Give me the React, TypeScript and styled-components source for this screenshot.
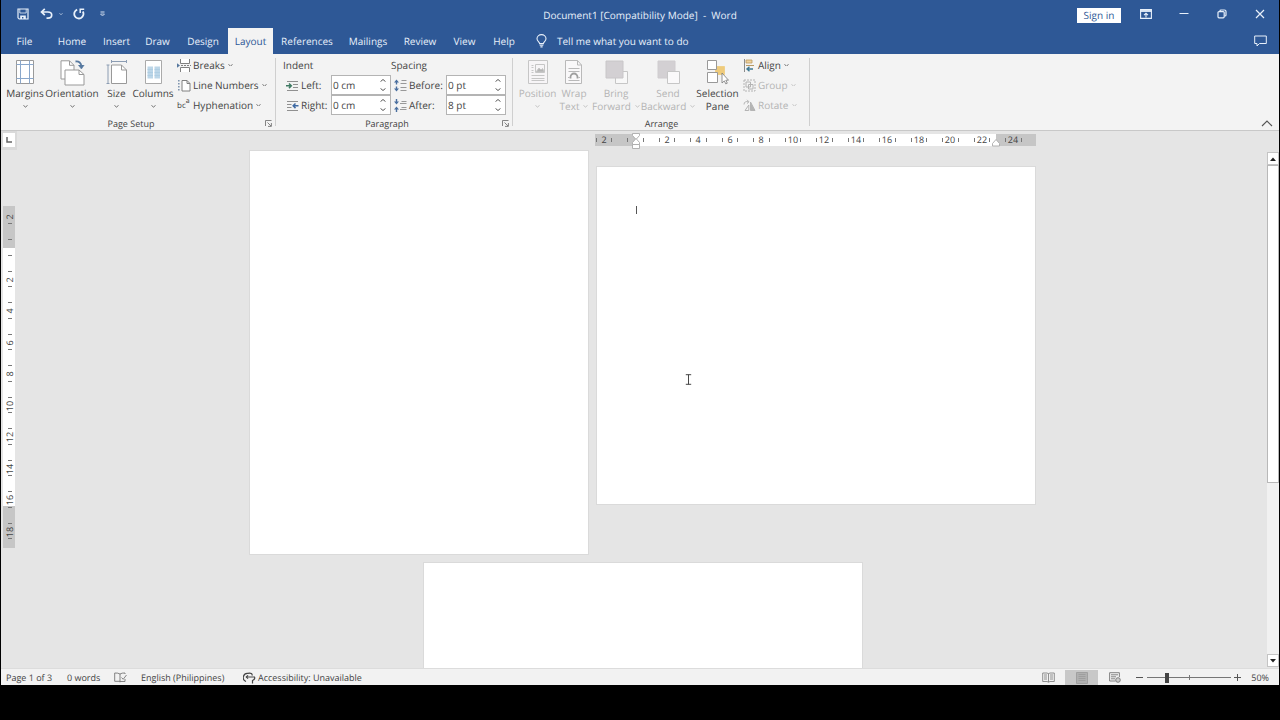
import React from "react";
import styled, { createGlobalStyle } from "styled-components";

const color = {
  brand: "#2e5896",
  brandText: "#e8f0fa",
  ribbon: "#f3f3f3",
  canvas: "#e5e5e5",
  line: "#c8c8c8",
  text: "#444444",
  muted: "#b4b4b4",
};

const GlobalStyle = createGlobalStyle`
  *, *::before, *::after { box-sizing: border-box; }
  body {
    margin: 0;
    background: #000;
    font-family: "Open Sans", "Noto Sans", sans-serif;
    font-size: 10px;
    line-height: 13px;
    color: ${color.text};
    text-rendering: geometricPrecision;
  }
  button, input {
    font: inherit;
    color: inherit;
    text-rendering: inherit;
    margin: 0;
    padding: 0;
    border: 0;
    background: none;
    border-radius: 0;
  }
  svg { display: block; flex: none; }
`;

const Window = styled.div`
  display: flex;
  flex-direction: column;
  height: 100vh;
  min-height: 420px;
  padding: 0 1px 35px;
  background: #000;
  overflow: hidden;
`;

/* Title bar */

const TitleBar = styled.header`
  display: grid;
  grid-template-columns: 1fr auto 1fr;
  align-items: center;
  height: 28px;
  flex: none;
  background: ${color.brand};
  color: ${color.brandText};
`;

const QuickAccess = styled.div`
  display: flex;
  align-items: center;
  gap: 7px;
  padding-left: 15px;
`;

const IconButton = styled.button<{ $width?: number }>`
  display: flex;
  align-items: center;
  justify-content: center;
  width: ${(p) => p.$width ?? 14}px;
  height: 14px;
`;

const UndoGroup = styled.div`
  display: flex;
  align-items: center;
  gap: 5px;
  padding: 0 2px;
`;

const DocumentTitle = styled.h1`
  margin: 0;
  padding-top: 2px;
  font-size: 10px;
  font-weight: 400;
  white-space: pre;
`;

const WindowControls = styled.div`
  display: flex;
  align-items: center;
  justify-content: flex-end;
`;

const SignIn = styled.button`
  width: 44px;
  height: 15px;
  margin: 2px 6px 0 0;
  background: #fff;
  color: ${color.brand};
`;

/* Tabs */

const TabBar = styled.nav`
  display: flex;
  align-items: stretch;
  height: 26px;
  flex: none;
  background: ${color.brand};
  color: ${color.brandText};
`;

const Tab = styled.button<{ $width: number; $active?: boolean }>`
  width: ${(p) => p.$width}px;
  flex: none;
  white-space: nowrap;
  background: ${(p) => (p.$active ? color.ribbon : "transparent")};
  color: ${(p) => (p.$active ? color.brand : color.brandText)};
`;

const TellMe = styled.button`
  display: flex;
  align-items: center;
  gap: 10px;
  margin-left: 12px;
  white-space: nowrap;
`;

const CommentButton = styled.button`
  display: flex;
  align-items: center;
  justify-content: center;
  width: 38px;
  margin-left: auto;
`;

/* Ribbon */

const Ribbon = styled.section`
  display: flex;
  flex: none;
  height: 77px;
  background: ${color.ribbon};
  border-bottom: 1px solid ${color.line};
`;

const Group = styled.div<{ $width: number }>`
  position: relative;
  display: flex;
  flex-direction: column;
  flex: none;
  width: ${(p) => p.$width}px;

  &::after {
    content: "";
    position: absolute;
    top: 4px;
    bottom: 4px;
    right: 0;
    width: 1px;
    background: #cfcfcf;
  }
`;

const GroupBody = styled.div<{ $inset: number }>`
  display: flex;
  flex: 1;
  padding-left: ${(p) => p.$inset}px;
`;

const GroupFooter = styled.div`
  display: flex;
  align-items: center;
  height: 13px;
`;

const GroupName = styled.h2`
  flex: 1;
  margin: 0;
  font-size: 9px;
  font-weight: 400;
  text-align: center;
`;

const Launcher = styled.button`
  display: flex;
  align-items: center;
  justify-content: center;
  width: 15px;
  height: 13px;
`;

const LargeButton = styled.button<{ $width: number }>`
  display: flex;
  flex-direction: column;
  align-items: center;
  flex: none;
  width: ${(p) => p.$width}px;
  padding-top: 6px;
  white-space: nowrap;

  &:disabled { color: ${color.muted}; }
`;

const LargeIcon = styled.span`
  display: flex;
  justify-content: center;
  height: 27px;
`;

const LabelLine = styled.span`
  display: flex;
  align-items: center;
  gap: 4px;
  height: 13px;
`;

const Stack = styled.div`
  display: flex;
  flex-direction: column;
  padding: 1px 0 0 4px;
`;

const SmallButton = styled.button`
  display: flex;
  align-items: center;
  gap: 2px;
  height: 20px;
  white-space: nowrap;

  &:disabled { color: ${color.muted}; }
`;

const SmallLabel = styled.span`
  padding-right: 1px;
`;

const FieldColumn = styled.div<{ $width: number }>`
  display: flex;
  flex-direction: column;
  flex: none;
  width: ${(p) => p.$width}px;
  padding-top: 1px;
`;

const FieldHeading = styled.span`
  height: 20px;
  line-height: 20px;
`;

const Field = styled.div`
  display: flex;
  align-items: center;
  gap: 2px;
  height: 20px;
  padding-left: 3px;

  label { flex: 1; white-space: nowrap; }
`;

const Spinner = styled.div`
  display: flex;
  width: 60px;
  height: 20px;
  background: #fff;
  border: 1px solid #b4b4b4;

  input {
    flex: 1;
    min-width: 0;
    padding-left: 1px;
  }
`;

const SpinnerArrows = styled.div`
  display: flex;
  flex-direction: column;
  width: 14px;

  button {
    display: flex;
    flex: 1;
    align-items: center;
    justify-content: center;
  }
`;

const CollapseButton = styled.button`
  display: flex;
  align-items: center;
  justify-content: center;
  align-self: flex-end;
  width: 24px;
  height: 14px;
  margin-left: auto;
`;

/* Work area */

const WorkArea = styled.main`
  display: flex;
  flex: 1;
  min-height: 0;
  background: ${color.canvas};
`;

const LeftRail = styled.div`
  display: flex;
  flex-direction: column;
  align-items: center;
  gap: 56px;
  width: 16px;
  flex: none;
`;

const TabSelector = styled.button`
  display: flex;
  align-items: center;
  justify-content: center;
  width: 16px;
  height: 19px;
  flex: none;
  background: #fff;
  border: 2px solid #dadada;
  border-bottom-width: 3px;
`;

const Canvas = styled.div`
  display: flex;
  flex-direction: column;
  align-items: center;
  flex: 1;
  min-width: 0;
  padding-left: 1px;
  overflow: hidden;
`;

const RulerRow = styled.div`
  display: flex;
  justify-content: flex-end;
  width: 787px;
  height: 19px;
  flex: none;
  padding-top: 2px;
`;

const PageRow = styled.div`
  display: flex;
  align-items: flex-start;
  gap: 7px;
  flex: none;
  padding-bottom: 7px;
`;

const Page = styled.article<{ $width: number; $height: number; $drop?: number }>`
  position: relative;
  flex: none;
  width: ${(p) => p.$width}px;
  height: ${(p) => p.$height}px;
  margin-top: ${(p) => p.$drop ?? 0}px;
  padding: 39px;
  background: #fff;
  border: 1px solid #dadada;
`;

const Caret = styled.div`
  width: 1px;
  height: 8px;
  background: #555;
`;

const Pointer = styled.div`
  position: absolute;
  left: 88px;
  top: 207px;
`;

const ScrollBar = styled.div`
  display: flex;
  flex-direction: column;
  justify-content: space-between;
  width: 12px;
  flex: none;
  margin: 21px 0 1px;
  background: #f1f1f1;
`;

const ScrollButton = styled.button`
  display: flex;
  align-items: center;
  justify-content: center;
  height: 13px;
  flex: none;
  background: #fff;
  border: 1px solid #c4c4c4;
`;

const ScrollTrack = styled.div`
  flex: 1;
`;

const ScrollThumb = styled.div`
  height: 65%;
  background: #fff;
  border: 1px solid #b8b8b8;
`;

/* Status bar */

const StatusBar = styled.footer`
  display: flex;
  align-items: center;
  justify-content: space-between;
  height: 17px;
  flex: none;
  padding: 0 10px 0 5px;
  background: #f2f2f2;
  border-top: 1px solid #dcdcdc;
  font-size: 9px;
`;

const StatusSide = styled.div`
  display: flex;
  align-items: center;
  height: 100%;
  padding-top: 1px;
`;

const StatusItem = styled.button<{ $width?: number }>`
  display: flex;
  align-items: center;
  gap: 2px;
  width: ${(p) => (p.$width ? `${p.$width}px` : "auto")};
  white-space: nowrap;
`;

const ViewButton = styled.button<{ $active?: boolean }>`
  display: flex;
  align-items: center;
  justify-content: center;
  width: 33px;
  height: 100%;
  background: ${(p) => (p.$active ? "#c8c8c8" : "transparent")};
`;

const ZoomRange = styled.input`
  appearance: none;
  width: 84px;
  height: 10px;
  margin: 0 3px 0 0;
  background:
    linear-gradient(#777, #777) center / 1px 5px no-repeat,
    linear-gradient(#777, #777) center / 100% 1px no-repeat;

  &::-webkit-slider-thumb {
    appearance: none;
    width: 4px;
    height: 10px;
    background: #444;
  }
`;

const ZoomValue = styled.output`
  width: 28px;
  text-align: right;
`;

/* Icons */

const Chevron = ({ up = false, size = 5 }: { up?: boolean; size?: number }) => (
  <svg width={size} height={size / 2} viewBox="0 0 6 3" fill="none" stroke="currentColor" strokeWidth="0.9">
    <path d={up ? "M.5 2.6 3 .5l2.5 2.1" : "M.5.4 3 2.5 5.5.4"} />
  </svg>
);

const CollapseIcon = () => (
  <svg width="12" height="7" viewBox="0 0 12 7" fill="none" stroke="#555" strokeWidth="1.1">
    <path d="M1 6 6 1l5 5" />
  </svg>
);

const SaveIcon = () => (
  <svg width="12" height="12" viewBox="0 0 12 12" fill="none" stroke="currentColor" strokeWidth="1.2">
    <path d="M1 1h10v10H2.2L1 9.8z" />
    <path d="M2.8 1v4h6.4V1" strokeWidth=".8" />
    <path d="M3.2 11V7.4h5.6V11H6.4V9H5v2z" fill="currentColor" stroke="none" />
  </svg>
);

const UndoIcon = () => (
  <svg width="13" height="12" viewBox="0 0 13 12" fill="none" stroke="currentColor" strokeWidth="1.7">
    <path d="M4.8.8 1.5 4l3.3 3.2M1.8 4h6c2.4 0 3.9 1.2 3.9 3.1S10.2 10.2 8 10.2H6.5" />
  </svg>
);

const RedoIcon = () => (
  <svg width="12" height="12" viewBox="0 0 12 12" fill="none" stroke="currentColor" strokeWidth="1.8">
    <path d="M4.2 1.6A4.6 4.6 0 1 0 9.8 3.5" />
    <path d="M7.2 5V1.2h4" strokeWidth="1.5" />
  </svg>
);

const CustomizeIcon = () => (
  <svg width="5" height="6" viewBox="0 0 5 6" fill="none" stroke="currentColor">
    <path d="M.5 1h4" strokeWidth=".9" />
    <path d="M.5 3 2.5 5l2-2z" strokeWidth=".7" />
  </svg>
);

const RibbonDisplayIcon = () => (
  <svg width="12" height="10" viewBox="0 0 12 10" fill="none" stroke="currentColor">
    <path d="M.6.6h10.8v8.8H.6z" strokeWidth="1.1" />
    <path d="M.6 2h10.8" strokeWidth="1.8" />
    <path d="M6 8.500V4.500M4 6.200l2-2 2 2" strokeWidth="1.1" />
  </svg>
);

const MinimizeIcon = () => (
  <svg width="10" height="10" viewBox="0 0 10 10" stroke="currentColor">
    <path d="M.5 4.500h9" />
  </svg>
);

const RestoreIcon = () => (
  <svg width="10" height="10" viewBox="0 0 10 10" fill="none" stroke="currentColor" strokeWidth="1.2">
    <rect x="1" y="2.6" width="6.2" height="6.2" rx="1" />
    <path d="M3 2.400V2q0-1 1-1h3.500Q9 1 9 2.500V6q0 1-1 1h-.5" />
  </svg>
);

const CloseIcon = () => (
  <svg width="10" height="10" viewBox="0 0 10 10" stroke="currentColor" strokeWidth="1.2">
    <path d="m1 1 8 8M9 1 1 9" />
  </svg>
);

const BulbIcon = () => (
  <svg width="11" height="14" viewBox="0 0 11 14" fill="none" stroke="currentColor" strokeWidth="1.1">
    <path d="M3.6 9.6C3.6 7.8 1 7.2 1 4.800a4.500 4.200 0 0 1 9 0c0 2.400-2.600 3-2.600 4.800zM3.700 11.200h3.600M4.400 12.900h2.200" />
  </svg>
);

const CommentIcon = () => (
  <svg width="13" height="12" viewBox="0 0 13 12" fill="none" stroke="currentColor">
    <path d="M.7 1h11.6v7.500H5.500L3 11V8.500H.7z" />
  </svg>
);

const MarginsIcon = () => (
  <svg width="20" height="25" viewBox="0 0 20 25" fill="none">
    <path d="M1.500.5h17v23h-17z" fill="#fff" stroke="#9a9a9a" />
    <path d="M5.500.5v23M14.500.5v23M1.500 4.500h17M1.500 18.500h17" stroke="#8aa7cb" />
  </svg>
);

const OrientationIcon = () => (
  <svg width="25" height="26" viewBox="0 0 25 26" fill="none" stroke="#999">
    <path d="M1 .8h8.500L14 5.300V19H1z" fill="#fff" />
    <path d="M9.500.8v4.500H14" />
    <path d="M5 10h14l5 4.500V25H5z" fill="#fff" />
    <path d="M19 10v4.500h5" />
    <path d="M15.500 1.500c3.500-.4 5.700 1.300 5.900 5" stroke="#56789f" strokeWidth="1.8" />
    <path d="m18.300 5 3.100 4 2.800-4" fill="#56789f" stroke="#56789f" strokeWidth=".6" />
  </svg>
);

const SizeIcon = () => (
  <svg width="22" height="25" viewBox="0 0 22 25" fill="none">
    <path d="M5.500 5h10l5 5v13.500h-15z" fill="#fff" stroke="#999" />
    <path d="M15.500 5v5h5" stroke="#999" />
    <path d="M5.500 1.500h15M5.500 0v3M20.500 0v3M2 5v18.500M.5 5h3M.5 23.500h3" stroke="#8c9db3" />
  </svg>
);

const ColumnsIcon = () => (
  <svg width="19" height="25" viewBox="0 0 19 25">
    <path d="M1.500.5h16v23h-16z" fill="#fff" stroke="#aaa" />
    <path d="M3.500 6.500H9v12H3.500zM10.500 6.500H16v12h-5.500z" fill="#bcd6e8" />
    <path d="M3.500 9.500H9M3.500 12.500H9M3.500 15.500H9M10.500 9.500H16M10.500 12.500H16M10.500 15.500H16" stroke="#a9cae1" strokeWidth=".7" />
  </svg>
);

const BreaksIcon = () => (
  <svg width="14" height="13" viewBox="0 0 14 13" fill="none" stroke="#808080">
    <path d="M3.500 0v4.500h9V0M3.500 13V8.500h9V13" fill="#fff" />
    <path d="M4 6.500h10" strokeDasharray="2 1" />
    <path d="M0 4.200 3 6.500 0 8.800z" fill="#56789f" stroke="none" />
  </svg>
);

const LineNumbersIcon = () => (
  <svg width="14" height="13" viewBox="0 0 14 13" fill="none" stroke="#808080">
    <path d="M5 1.500h5l3 3V12H5z" fill="#fff" />
    <path d="M10 1.500v3h3" />
    <path d="M1.800 1v11.500" stroke="#8096b0" strokeWidth="1.6" strokeDasharray="1.5 1.5" />
  </svg>
);

const HyphenIcon = styled.span`
  display: flex;
  align-items: flex-start;
  width: 14px;
  height: 14px;
  font-size: 8px;
  line-height: 16px;

  sup {
    font-size: 7px;
    line-height: 7px;
  }
`;

const HyphenationIcon = () => (
  <HyphenIcon aria-hidden="true">
    bc<sup>a</sup>
  </HyphenIcon>
);

const IndentIcon = ({ right = false }: { right?: boolean }) => (
  <svg width="13" height="11" viewBox="0 0 13 11" fill="none" stroke="#909090">
    <path d={right ? "M1 1.500h11M1 4.500h4.500M1 7.500h4.500M1 10.500h11" : "M1 1.500h11M7 4.500h5M7 7.500h5M1 10.500h11"} />
    <path
      d={right ? "M12.500 5.800H8M9.500 3.500 7.200 5.800l2.300 2.300" : "M0 5.800h4.500M3 3.500l2.300 2.300L3 8.100"}
      stroke={right ? "#3f6aa3" : "#3f7a63"}
      strokeWidth="1.5"
    />
  </svg>
);

const SpacingIcon = ({ after = false }: { after?: boolean }) => (
  <svg width="13" height="13" viewBox="0 0 13 13" fill="none">
    <path d={after ? "M2.500 0v3M2.500 13v-3" : "M2.500 2v3.500M2.500 11V7.500"} stroke="#4a6f9f" strokeWidth="1.4" />
    <path
      d={after ? "M0 2.500h5L2.500 5.500zM0 10.500h5L2.500 7.500z" : "M0 3.500h5L2.500.5zM0 9.500h5L2.500 12.500z"}
      fill="#4a6f9f"
    />
    <path d={after ? "M7.500 2.500h5M6 4.500h6.500M7.500 8.500h5M6 10.500h6.500" : "M7.500 1.500h5M6.500 4.500h6M6.500 8.500h6M6.500 11.500h6"} stroke="#999" />
  </svg>
);

const LauncherIcon = () => (
  <svg width="7" height="7" viewBox="0 0 7 7" fill="none" stroke="#777" strokeWidth=".9">
    <path d="M.5 6V.5H6.500M2.500 2.500 6 6M6.400 3v3.400H3" />
  </svg>
);

const PositionIcon = () => (
  <svg width="20" height="25" viewBox="0 0 20 25" fill="none" stroke="#c6c6c6">
    <path d="M.5.5h19v23H.5z" fill="#f7f5f7" />
    <path d="M7.500 4.500h9v8h-9z" />
    <path d="m8 12 3-4 2 2 1.500-1.500 2 3.500z" fill="#b5b5b5" />
    <path d="M3.500 5.500h2M3.500 7.500h2M3.500 10.500h2M3.500 12.500h2M3.500 15.500h13M3.500 18.500h13M3.500 20.500h13" />
  </svg>
);

const WrapTextIcon = () => (
  <svg width="18" height="25" viewBox="0 0 18 25" fill="none" stroke="#b9b9b9">
    <path d="M.5.5h12l4 4.500v18.500H.5z" fill="#f9f8f9" />
    <path d="M12.500.5v4.500h4" />
    <path d="M3.500 8.500h11M3.500 11.500h11M3.500 20.500h11M3 17.500h1.500M13.500 17.500H15" />
    <path d="M5.500 18.500v-1.500a3.500 3.500 0 0 1 7 0v1.500" stroke="#9f9f9f" strokeWidth="1.8" />
  </svg>
);

const BringForwardIcon = () => (
  <svg width="23" height="25" viewBox="0 0 23 25">
    <path d="M10.500 11.500h12v12h-12z" fill="#f8f8f8" stroke="#c6c6c6" />
    <path d="M1 1h17v17H1z" fill="#d3d0d3" stroke="#c8c6c8" />
  </svg>
);

const SendBackwardIcon = () => (
  <svg width="23" height="25" viewBox="0 0 23 25">
    <path d="M1 1h17v17H1z" fill="#d3d0d3" stroke="#cfcccf" />
    <path d="M10.500 11.500h12v12h-12z" fill="#faf9fa" stroke="#c6c6c6" />
  </svg>
);

const SelectionPaneIcon = () => (
  <svg width="22" height="25" viewBox="0 0 22 25" fill="#fff" stroke="#999">
    <path d="M8.500 6.500h9v8h-9z" fill="#efcb7b" stroke="#efd08a" />
    <path d="M.5.5h9v9h-9zM.5 12.500h10v10H.5z" />
    <path d="M15 13v10l2.300-2.100 1.500 3 1.500-.7-1.500-3h2.700z" stroke="#777" strokeWidth=".8" />
  </svg>
);

const AlignIcon = () => (
  <svg width="13" height="13" viewBox="0 0 13 13" fill="none">
    <path d="M1.500 0v13" stroke="#8a8a8a" />
    <path d="M3 1h6v3H3z" fill="#f0d29c" stroke="#b99a63" strokeWidth=".8" />
    <path d="M3 6.500h8" stroke="#b99a63" />
    <path d="M3.500 10h6.500M6.500 7.800l-2.500 2.200L6.500 12.200" stroke="#3f7a94" strokeWidth="1.4" />
  </svg>
);

const GroupIcon = () => (
  <svg width="13" height="13" viewBox="0 0 13 13" fill="none" stroke="#b4b4b4">
    <path d="M1 1h11v11H1z" strokeDasharray="2 1" />
    <path d="M3 3h4.500v5H3zM5.500 5.500H10v4.500H5.500z" />
  </svg>
);

const RotateIcon = () => (
  <svg width="13" height="13" viewBox="0 0 13 13" fill="none" stroke="#b4b4b4">
    <path d="M1 5.500C1 3 3 2 5.500 2.800M4 .8l2 2-2 1.700" />
    <path d="M7.500 3v8.500h4.500z" fill="#b4b4b4" />
    <path d="M5.800 6v5.500H2z" />
  </svg>
);

const ProofingIcon = () => (
  <svg width="13" height="11" viewBox="0 0 13 11" fill="none" stroke="#777" strokeWidth=".9">
    <path d="M6 2v8.300M6 2Q4 .8.7 1v8.300H6M6 2Q8 .8 11 1v1M6 9.500h5V7M7.500 5.500l1.700 1.800L12.500 3" />
  </svg>
);

const AccessibilityIcon = () => (
  <svg width="13" height="12" viewBox="0 0 13 12" fill="none" stroke="#444" strokeWidth="1.2">
    <path d="M5 1.400A4.200 4.200 0 0 0 3 9.500M5 1.400c3-.8 4.500.6 4 2.100M3.500 5h8q1 2-2 3.500v3" />
    <path d="m5 3.300-1.700 1.700L5 6.700" />
  </svg>
);

const ReadModeIcon = () => (
  <svg width="13" height="11" viewBox="0 0 13 11" fill="none" stroke="#777" strokeWidth=".8">
    <path d="M6.500 1.500v8.500M.7 1h4.300l1.500.7L8 1h4.300v8.500H8l-1.500.7-1.500-.7H.7z" />
    <path d="M2 3h3M2 5h3M2 7h3M8 3h3M8 5h3M8 7h3" />
  </svg>
);

const PrintLayoutIcon = () => (
  <svg width="12" height="12" viewBox="0 0 12 12" fill="none" stroke="#999" strokeWidth=".8">
    <path d="M.5.5h11v11H.5z" fill="#b0b0b0" />
    <path d="M2.500 2.500h7M2.500 4.500h7M2.500 6.500h7M2.500 8.500h7" />
  </svg>
);

const WebLayoutIcon = () => (
  <svg width="12" height="11" viewBox="0 0 12 11" fill="none" stroke="#777" strokeWidth=".9">
    <path d="M6.500 9H.6V.7h9.800V5M2 2.800h7M2 4.800h5M2 6.800h4" />
    <circle cx="9" cy="8" r="2.3" fill="#ccc" />
  </svg>
);

const TextPointerIcon = () => (
  <svg width="7" height="11" viewBox="0 0 7 11" fill="none" stroke="#333">
    <path d="M.8.7h5.400M.8 10.300h5.400M3.500.7v9.600" strokeWidth=".9" />
  </svg>
);

/* Rulers: one number every two centimetres and a tick at each half step */

const PX_PER_CM = 15.75;

type RulerProps = {
  vertical?: boolean;
  length: number;
  start: number;
  end: number;
  zero: number;
  firstTick: number;
  lastTick: number;
  numbers: number[];
};

const Ruler = ({ vertical, length, start, end, zero, firstTick, lastTick, numbers }: RulerProps) => {
  const ticks: number[] = [];
  for (let cm = firstTick; cm <= lastTick; cm += 1) ticks.push(cm);
  const at = (cm: number) => Math.round(zero + cm * PX_PER_CM);
  return (
    <svg width={vertical ? 12 : length} height={vertical ? length : 16} role="img" aria-label="Ruler">
      <g transform={vertical ? `translate(0 ${length}) rotate(-90)` : undefined}>
        <rect width={length} height="12" y={vertical ? 0 : 1} fill="#c6c6c6" />
        <rect x={vertical ? length - end : start} y={vertical ? 0 : 1} width={end - start} height="12" fill="#fff" />
        {ticks.map((cm) => (
          <rect key={cm} x={vertical ? length - at(cm) : at(cm)} y="5" width="1" height="4" fill="#777" />
        ))}
        {numbers.map((cm) => (
          <text
            key={cm}
            x={vertical ? length - at(cm) : at(cm)}
            y="10"
            fontSize="9"
            fill="#444"
            textAnchor="middle"
          >
            {Math.abs(cm)}
          </text>
        ))}
      </g>
      {!vertical && (
        <g fill="#fff" stroke="#aaa" strokeWidth=".9">
          <path d={`M${start - 3.5} .5h7v2l-3.500 4-3.500-4z`} />
          <path d={`M${start - 3.5} 11.500v-2l3.500-4 3.500 4v2z`} />
          <path d={`M${start - 3.5} 11.500h7v4h-7z`} />
          <path d={`M${end - 3.5} 13v-2.500l3.500-4 3.500 4V13z`} />
        </g>
      )}
    </svg>
  );
};

/* Composite controls */

const NumberField = ({ id, label, value, icon }: { id: string; label: string; value: string; icon: React.ReactNode }) => (
  <Field>
    {icon}
    <label htmlFor={id}>{label}</label>
    <Spinner>
      <input id={id} type="text" defaultValue={value} />
      <SpinnerArrows>
        <button type="button" aria-label={`Increase ${label}`}><Chevron up size={6} /></button>
        <button type="button" aria-label={`Decrease ${label}`}><Chevron size={6} /></button>
      </SpinnerArrows>
    </Spinner>
  </Field>
);

type LargeProps = {
  width: number;
  icon: React.ReactNode;
  label: string;
  second?: string;
  menu?: boolean;
  disabled?: boolean;
};

const Large = ({ width, icon, label, second, menu = true, disabled }: LargeProps) => (
  <LargeButton type="button" $width={width} disabled={disabled}>
    <LargeIcon>{icon}</LargeIcon>
    <LabelLine>{label}</LabelLine>
    <LabelLine>
      {second}
      {menu && <Chevron />}
    </LabelLine>
  </LargeButton>
);

const Small = ({ icon, label, disabled }: { icon: React.ReactNode; label: string; disabled?: boolean }) => (
  <SmallButton type="button" disabled={disabled}>
    {icon}
    <SmallLabel>{label}</SmallLabel>
    <Chevron />
  </SmallButton>
);

const tabs = [
  { name: "File", width: 47 },
  { name: "Home", width: 48 },
  { name: "Insert", width: 41 },
  { name: "Draw", width: 41 },
  { name: "Design", width: 50 },
  { name: "Layout", width: 45 },
  { name: "References", width: 68 },
  { name: "Mailings", width: 54 },
  { name: "Review", width: 50 },
  { name: "View", width: 39 },
  { name: "Help", width: 40 },
];

export default function App() {
  return (
    <>
      <GlobalStyle />
      <Window>
        <TitleBar>
          <QuickAccess>
            <IconButton type="button" aria-label="Save"><SaveIcon /></IconButton>
            <UndoGroup>
              <IconButton type="button" aria-label="Undo"><UndoIcon /></IconButton>
              <IconButton type="button" aria-label="Undo history" $width={5}><Chevron size={4} /></IconButton>
            </UndoGroup>
            <IconButton type="button" aria-label="Redo"><RedoIcon /></IconButton>
            <IconButton type="button" aria-label="Customize toolbar" $width={18}><CustomizeIcon /></IconButton>
          </QuickAccess>
          <DocumentTitle>{"Document1 [Compatibility Mode]  -  Word"}</DocumentTitle>
          <WindowControls>
            <SignIn type="button">Sign in</SignIn>
            <IconButton type="button" aria-label="Ribbon display options" $width={38}><RibbonDisplayIcon /></IconButton>
            <IconButton type="button" aria-label="Minimize" $width={38}><MinimizeIcon /></IconButton>
            <IconButton type="button" aria-label="Restore" $width={38}><RestoreIcon /></IconButton>
            <IconButton type="button" aria-label="Close" $width={38}><CloseIcon /></IconButton>
          </WindowControls>
        </TitleBar>

        <TabBar>
          {tabs.map((tab) => (
            <Tab key={tab.name} type="button" $width={tab.width} $active={tab.name === "Layout"}>
              {tab.name}
            </Tab>
          ))}
          <TellMe type="button">
            <BulbIcon />
            Tell me what you want to do
          </TellMe>
          <CommentButton type="button" aria-label="Comments"><CommentIcon /></CommentButton>
        </TabBar>

        <Ribbon>
          <Group $width={275}>
            <GroupBody $inset={5}>
              <Large width={38} icon={<MarginsIcon />} label="Margins" />
              <Large width={56} icon={<OrientationIcon />} label="Orientation" />
              <Large width={33} icon={<SizeIcon />} label="Size" />
              <Large width={40} icon={<ColumnsIcon />} label="Columns" />
              <Stack>
                <Small icon={<BreaksIcon />} label="Breaks" />
                <Small icon={<LineNumbersIcon />} label="Line Numbers" />
                <Small icon={<HyphenationIcon />} label="Hyphenation" />
              </Stack>
            </GroupBody>
            <GroupFooter>
              <GroupName>Page Setup</GroupName>
              <Launcher type="button" aria-label="Page Setup settings"><LauncherIcon /></Launcher>
            </GroupFooter>
          </Group>

          <Group $width={237}>
            <GroupBody $inset={7}>
              <FieldColumn $width={108}>
                <FieldHeading>Indent</FieldHeading>
                <NumberField id="indent-left" label="Left:" value="0 cm" icon={<IndentIcon />} />
                <NumberField id="indent-right" label="Right:" value="0 cm" icon={<IndentIcon right />} />
              </FieldColumn>
              <FieldColumn $width={115}>
                <FieldHeading>Spacing</FieldHeading>
                <NumberField id="space-before" label="Before:" value="0 pt" icon={<SpacingIcon />} />
                <NumberField id="space-after" label="After:" value="8 pt" icon={<SpacingIcon after />} />
              </FieldColumn>
            </GroupBody>
            <GroupFooter>
              <GroupName>Paragraph</GroupName>
              <Launcher type="button" aria-label="Paragraph settings"><LauncherIcon /></Launcher>
            </GroupFooter>
          </Group>

          <Group $width={297}>
            <GroupBody $inset={6}>
              <Large width={37} icon={<PositionIcon />} label="Position" disabled />
              <Large width={36} icon={<WrapTextIcon />} label="Wrap" second="Text" disabled />
              <Large width={48} icon={<BringForwardIcon />} label="Bring" second="Forward" disabled />
              <Large width={56} icon={<SendBackwardIcon />} label="Send" second="Backward" disabled />
              <Large width={43} icon={<SelectionPaneIcon />} label="Selection" second="Pane" menu={false} />
              <Stack>
                <Small icon={<AlignIcon />} label="Align" />
                <Small icon={<GroupIcon />} label="Group" disabled />
                <Small icon={<RotateIcon />} label="Rotate" disabled />
              </Stack>
            </GroupBody>
            <GroupFooter>
              <GroupName>Arrange</GroupName>
            </GroupFooter>
          </Group>

          <CollapseButton type="button" aria-label="Collapse the ribbon"><CollapseIcon /></CollapseButton>
        </Ribbon>

        <WorkArea>
          <LeftRail>
            <TabSelector type="button" aria-label="Tab stop">
              <svg width="6" height="6" viewBox="0 0 6 6" fill="none" stroke="#666" strokeWidth="1.5">
                <path d="M1 0v5h5" />
              </svg>
            </TabSelector>
            <Ruler
              vertical
              length={342}
              start={42}
              end={300}
              zero={42}
              firstTick={-1.5}
              lastTick={18.5}
              numbers={[-2, 2, 4, 6, 8, 10, 12, 14, 16, 18]}
            />
          </LeftRail>
          <Canvas>
            <RulerRow>
              <Ruler
                length={441}
                start={41}
                end={401}
                zero={40}
                firstTick={-2.5}
                lastTick={24.5}
                numbers={[-2, 2, 4, 6, 8, 10, 12, 14, 16, 18, 20, 22, 24]}
              />
            </RulerRow>
            <PageRow>
              <Page $width={340} $height={405} />
              <Page $width={440} $height={339} $drop={16}>
                <Caret />
                <Pointer><TextPointerIcon /></Pointer>
              </Page>
            </PageRow>
            <Page $width={440} $height={339} />
          </Canvas>
          <ScrollBar>
            <ScrollButton type="button" aria-label="Scroll up">
              <svg width="6" height="4" viewBox="0 0 6 4"><path d="M0 4 3 .5 6 4z" fill="#222" /></svg>
            </ScrollButton>
            <ScrollTrack><ScrollThumb /></ScrollTrack>
            <ScrollButton type="button" aria-label="Scroll down">
              <svg width="6" height="4" viewBox="0 0 6 4"><path d="M0 0 3 3.500 6 0z" fill="#222" /></svg>
            </ScrollButton>
          </ScrollBar>
        </WorkArea>

        <StatusBar>
          <StatusSide>
            <StatusItem type="button" $width={61}>Page 1 of 3</StatusItem>
            <StatusItem type="button" $width={47}>0 words</StatusItem>
            <StatusItem type="button" $width={27} aria-label="Proofing"><ProofingIcon /></StatusItem>
            <StatusItem type="button" $width={102}>English (Philippines)</StatusItem>
            <StatusItem type="button"><AccessibilityIcon />Accessibility: Unavailable</StatusItem>
          </StatusSide>
          <StatusSide>
            <ViewButton type="button" aria-label="Read mode"><ReadModeIcon /></ViewButton>
            <ViewButton type="button" aria-label="Print layout" $active><PrintLayoutIcon /></ViewButton>
            <ViewButton type="button" aria-label="Web layout"><WebLayoutIcon /></ViewButton>
            <IconButton type="button" aria-label="Zoom out" $width={16}>
              <svg width="7" height="7" viewBox="0 0 7 7" stroke="#555"><path d="M0 3.500h7" /></svg>
            </IconButton>
            <ZoomRange type="range" aria-label="Zoom" min={0} max={100} defaultValue={23} />
            <IconButton type="button" aria-label="Zoom in" $width={7}>
              <svg width="7" height="7" viewBox="0 0 7 7" stroke="#555"><path d="M0 3.500h7M3.500 0v7" /></svg>
            </IconButton>
            <ZoomValue>50%</ZoomValue>
          </StatusSide>
        </StatusBar>
      </Window>
    </>
  );
}
